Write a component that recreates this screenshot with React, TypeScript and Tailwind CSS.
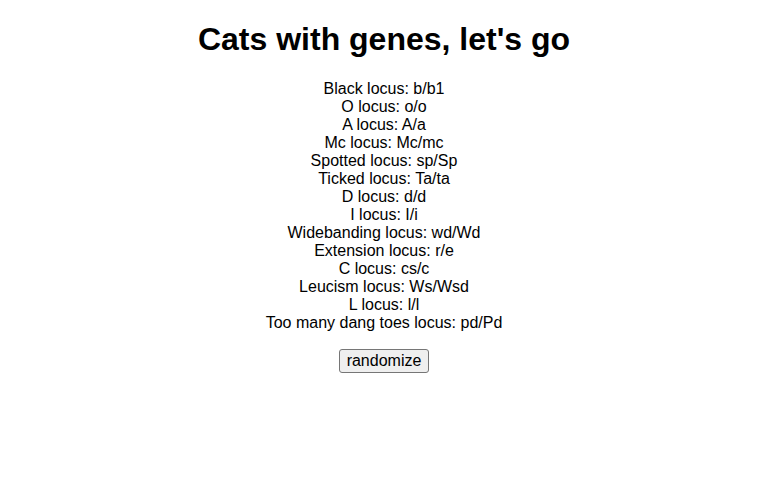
import React from "react";

const loci = [
  { name: "Black", value: "b/b1" },
  { name: "O", value: "o/o" },
  { name: "A", value: "A/a" },
  { name: "Mc", value: "Mc/mc" },
  { name: "Spotted", value: "sp/Sp" },
  { name: "Ticked", value: "Ta/ta" },
  { name: "D", value: "d/d" },
  { name: "I", value: "I/i" },
  { name: "Widebanding", value: "wd/Wd" },
  { name: "Extension", value: "r/e" },
  { name: "C", value: "cs/c" },
  { name: "Leucism", value: "Ws/Wsd" },
  { name: "L", value: "l/l" },
  { name: "Too many dang toes", value: "pd/Pd" },
];

const App = () => {
  return (
    <div className="text-center text-black font-['Liberation_Sans',Arial,sans-serif]">
      <h1 className="text-[32px] leading-[37px] font-bold pt-[21px] mb-[22px]">
        Cats with genes, let's go
      </h1>
      <div className="text-[16px] leading-[18px]">
        {loci.map(({ name, value }, key) => (
          <div key={key}>
            {name} locus: {value}
          </div>
        ))}
      </div>
      <div className="mt-[17px]">
        <button className="text-[16px] leading-[18px] bg-[#efefef] border border-[#767676] rounded-[3px] px-[7px] py-[2px] text-black">
          randomize
        </button>
      </div>
    </div>
  );
};

export default App;
